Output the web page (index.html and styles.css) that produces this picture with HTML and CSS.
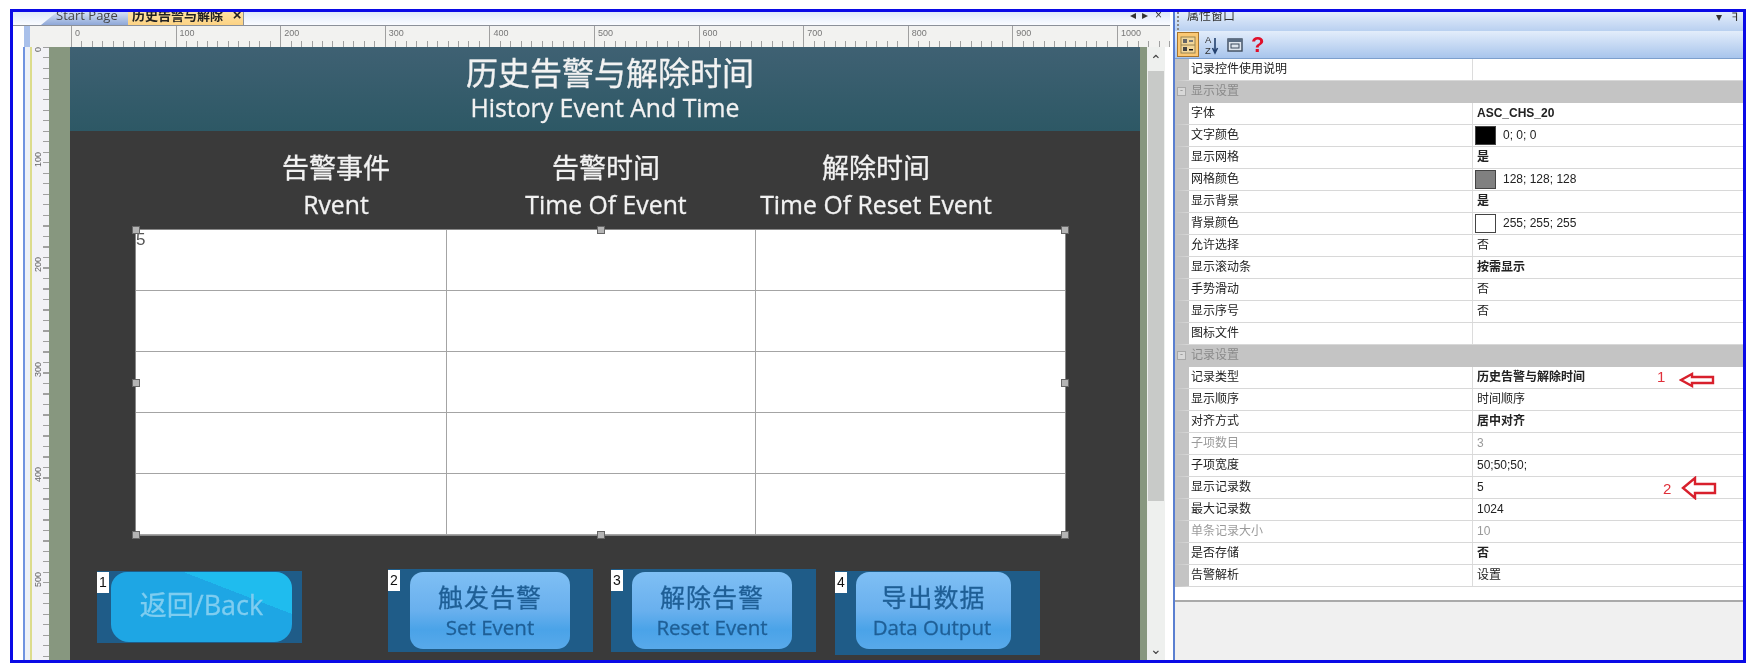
FILE: index.html
```html
<!DOCTYPE html>
<html>
<head>
  <meta charset="utf-8">
  <title>历史告警与解除时间</title>
  <link rel="stylesheet" href="styles.css">
</head>
<body>
  <div class="frame">

    <!-- designer pane -->
    <div class="designer">
      <div class="tabs">
        <div class="tab tab-start">Start Page</div>
        <div class="tab tab-active">历史告警与解除 <span class="tab-close">×</span></div>
        <div class="tab-tools">◂ &nbsp;▸ &nbsp;×</div>
      </div>

      <div class="ruler-row">
        <div class="ruler-corner"></div>
        <div class="ruler-h">
          <span>0</span><span>100</span><span>200</span><span>300</span><span>400</span><span>500</span><span>600</span><span>700</span><span>800</span><span>900</span><span>1000</span>
        </div>
      </div>

      <div class="workspace">
        <div class="gutter"></div>
        <div class="ruler-v">
          <span>0</span><span>100</span><span>200</span><span>300</span><span>400</span><span>500</span>
        </div>
        <div class="strip"></div>

        <div class="screen">
          <div class="screen-title">
            <div class="title-cn">历史告警与解除时间</div>
            <div class="title-en">History Event And Time</div>
          </div>

          <div class="col-heads">
            <div class="col-head"><div class="head-cn">告警事件</div><div class="head-en">Rvent</div></div>
            <div class="col-head"><div class="head-cn">告警时间</div><div class="head-en">Time Of Event</div></div>
            <div class="col-head"><div class="head-cn">解除时间</div><div class="head-en">Time Of Reset Event</div></div>
          </div>

          <div class="record-table">
            <div class="cell"></div><div class="cell"></div><div class="cell"></div>
            <div class="cell"></div><div class="cell"></div><div class="cell"></div>
            <div class="cell"></div><div class="cell"></div><div class="cell"></div>
            <div class="cell"></div><div class="cell"></div><div class="cell"></div>
            <div class="cell"></div><div class="cell"></div><div class="cell"></div>
            <span class="table-num">5</span>
            <i class="handle h-tl"></i><i class="handle h-tc"></i><i class="handle h-tr"></i>
            <i class="handle h-ml"></i><i class="handle h-mr"></i>
            <i class="handle h-bl"></i><i class="handle h-bc"></i><i class="handle h-br"></i>
          </div>

          <div class="buttons">
            <div class="btn-wrap btn-back">
              <span class="badge">1</span>
              <div class="btn btn-cyan"><div class="btn-single">返回/Back</div></div>
            </div>
            <div class="btn-wrap btn-set">
              <span class="badge">2</span>
              <div class="btn"><div class="btn-cn">触发告警</div><div class="btn-en">Set Event</div></div>
            </div>
            <div class="btn-wrap btn-reset">
              <span class="badge">3</span>
              <div class="btn"><div class="btn-cn">解除告警</div><div class="btn-en">Reset Event</div></div>
            </div>
            <div class="btn-wrap btn-output">
              <span class="badge">4</span>
              <div class="btn btn-narrow"><div class="btn-cn">导出数据</div><div class="btn-en">Data Output</div></div>
            </div>
          </div>
        </div>

        <div class="strip strip-right"></div>
        <div class="scrollbar">
          <span class="scroll-arrow">⌃</span>
          <div class="scroll-thumb"></div>
          <span class="scroll-arrow scroll-arrow-down">⌄</span>
        </div>
      </div>
    </div>

    <!-- property pane -->
    <div class="props">
      <div class="props-title">
        <span class="grip"></span>
        <span class="props-name">属性窗口</span>
        <span class="props-tools">▾ &nbsp;&nbsp;ꟻ</span>
      </div>

      <div class="toolbar">
        <span class="tool tool-active">
          <svg width="18" height="20" viewBox="0 0 18 20"><rect x="2" y="2" width="14" height="16" fill="#f3d79a" stroke="#9a8450"/><rect x="4" y="4" width="4" height="4" fill="#666"/><rect x="10" y="5" width="4" height="2" fill="#777"/><path d="M2 10h14" stroke="#9a8450"/><rect x="4" y="12" width="4" height="4" fill="#444"/><rect x="10" y="14" width="4" height="1.5" fill="#111"/></svg>
        </span>
        <span class="tool">
          <svg width="14" height="24" viewBox="0 0 14 24"><text x="0" y="10" class="az">A</text><text x="0" y="21" class="az">Z</text><path d="M10 5v14M7.5 15l2.5 5 2.500-5" fill="none" stroke="#24416e" stroke-width="1.6"/></svg>
        </span>
        <span class="tool tool-window">
          <svg width="16" height="14" viewBox="0 0 16 14"><rect x="1" y="1" width="14" height="12" fill="#dfe6ee" stroke="#3d4a5c" stroke-width="1.400"/><rect x="1" y="1" width="14" height="3" fill="#5a6c82"/><rect x="4" y="6" width="8" height="4" fill="none" stroke="#3d4a5c"/></svg>
        </span>
        <span class="tool tool-help">?</span>
      </div>

      <div class="grid">
        <div class="row"><div class="key">记录控件使用说明</div><div class="val"></div></div>
        <div class="row group"><span class="fold">-</span><div class="key">显示设置</div></div>
        <div class="row"><div class="key">字体</div><div class="val bold">ASC_CHS_20</div></div>
        <div class="row"><div class="key">文字颜色</div><div class="val"><i class="swatch swatch-black"></i>0; 0; 0</div></div>
        <div class="row"><div class="key">显示网格</div><div class="val bold">是</div></div>
        <div class="row"><div class="key">网格颜色</div><div class="val"><i class="swatch swatch-gray"></i>128; 128; 128</div></div>
        <div class="row"><div class="key">显示背景</div><div class="val bold">是</div></div>
        <div class="row"><div class="key">背景颜色</div><div class="val"><i class="swatch swatch-white"></i>255; 255; 255</div></div>
        <div class="row"><div class="key">允许选择</div><div class="val">否</div></div>
        <div class="row"><div class="key">显示滚动条</div><div class="val bold">按需显示</div></div>
        <div class="row"><div class="key">手势滑动</div><div class="val">否</div></div>
        <div class="row"><div class="key">显示序号</div><div class="val">否</div></div>
        <div class="row"><div class="key">图标文件</div><div class="val"></div></div>
        <div class="row group"><span class="fold">-</span><div class="key">记录设置</div></div>
        <div class="row">
          <div class="key">记录类型</div><div class="val bold">历史告警与解除时间</div>
          <span class="note note-1">1</span>
          <svg class="arrow arrow-1" width="36" height="16" viewBox="0 0 36 16"><path d="M2 8L13 2v3h21v6H13v3z" fill="none" stroke="#d8202c" stroke-width="2.400"/></svg>
        </div>
        <div class="row"><div class="key">显示顺序</div><div class="val">时间顺序</div></div>
        <div class="row"><div class="key">对齐方式</div><div class="val bold">居中对齐</div></div>
        <div class="row off"><div class="key">子项数目</div><div class="val">3</div></div>
        <div class="row"><div class="key">子项宽度</div><div class="val">50;50;50;</div></div>
        <div class="row">
          <div class="key">显示记录数</div><div class="val">5</div>
          <span class="note note-2">2</span>
          <svg class="arrow arrow-2" width="36" height="24" viewBox="0 0 36 24"><path d="M2 12L14 2v6h20v9H14v5z" fill="none" stroke="#d8202c" stroke-width="2.400"/></svg>
        </div>
        <div class="row"><div class="key">最大记录数</div><div class="val">1024</div></div>
        <div class="row off"><div class="key">单条记录大小</div><div class="val">10</div></div>
        <div class="row"><div class="key">是否存储</div><div class="val bold">否</div></div>
        <div class="row"><div class="key">告警解析</div><div class="val">设置</div></div>
      </div>
      <div class="grid-end"></div>
      <div class="description"></div>
    </div>

  </div>
</body>
</html>
```

FILE: styles.css
```css
body {
  margin: 0;
  background: #fff;
  font-family: "Liberation Sans", "Noto Sans CJK SC", sans-serif;
  font-size: 12px;
  color: #222;
}

.frame {
  margin: 9px 6px 0 10px;
  height: 648px;
  border: 3px solid #0a0ae6;
  display: flex;
  overflow: hidden;
  background: #fff;
  filter: blur(0.55px);
}

/* Designer pane */
.designer {
  width: 1157px;
  flex: none;
  display: flex;
  flex-direction: column;
}

.tabs {
  height: 13px;
  flex: none;
  display: flex;
  align-items: flex-end;
  background: linear-gradient(#dde8fa, #fafcff);
  border-bottom: 1px solid #8c9199;
  padding-left: 28px;
  overflow: hidden;
}

.tab {
  height: 13px;
  line-height: 6px;
  font-size: 12px;
  white-space: nowrap;
}

.tab-start {
  width: 87px;
  padding-left: 15px;
  box-sizing: border-box;
  color: #444;
  font-size: 13px;
  font-family: "Open Sans", sans-serif;
  background: linear-gradient(#d5e1f5, #8fa8d8);
  clip-path: polygon(16px 0, 100% 0, 100% 100%, 0 100%);
}

.tab-active {
  width: 116px;
  padding-left: 4px;
  box-sizing: border-box;
  background: linear-gradient(#fde2a4, #fdd384);
  font-size: 13px;
  font-weight: bold;
  border-right: 1px solid #8c9199;
}

.tab-close {
  margin-left: 6px;
  font-size: 15px;
}

.tab-tools {
  margin-left: auto;
  margin-right: 8px;
  line-height: 6px;
  height: 13px;
  color: #333;
}

.ruler-row {
  height: 21px;
  flex: none;
  display: flex;
  background: #f2f2f0;
}

.ruler-corner {
  width: 58px;
  flex: none;
  background: linear-gradient(90deg, #fff 0 11px, #a9c0ea 11px 17px, #f2f2f0 17px);
}

.ruler-h {
  flex: 1;
  display: flex;
  font-size: 9px;
  color: #777;
  background: repeating-linear-gradient(90deg, #a0a0a0 0, #a0a0a0 1px, transparent 1px, transparent 10.46px) 0 15px / 100% 6px no-repeat;
}

.ruler-h span {
  width: 104.6px;
  flex: none;
  box-sizing: border-box;
  padding-left: 3px;
  line-height: 14px;
  border-left: 1px solid #a0a0a0;
}

.workspace {
  flex: 1;
  min-height: 0;
  display: flex;
}

.gutter {
  width: 17px;
  flex: none;
  background: linear-gradient(90deg, #fff 0 10px, #6f93e0 10px 12px, #edf1f8 12px);
}

.ruler-v {
  width: 19px;
  flex: none;
  display: flex;
  flex-direction: column;
  font-size: 9px;
  color: #666;
  background: repeating-linear-gradient(180deg, #a0a0a0 0, #a0a0a0 1px, transparent 1px, transparent 10.5px) 11px 0 / 8px 100% no-repeat #f2f2f6;
  border-left: 2px solid #dcdc8c;
  box-sizing: border-box;
}

.ruler-v span {
  height: 105px;
  flex: none;
  writing-mode: vertical-rl;
  transform: rotate(180deg);
  text-align: right;
  line-height: 12px;
}

.strip {
  width: 21px;
  flex: none;
  background: #87977f;
}

.strip-right {
  width: 7px;
}

/* Panel being edited */
.screen {
  width: 1070px;
  flex: none;
  background: #3a3a3a;
  color: #f2f2f2;
  font-family: "Open Sans", "Noto Sans CJK SC", sans-serif;
  -webkit-text-stroke: 0.3px currentColor;
}

.screen-title {
  height: 84px;
  background: linear-gradient(#3f6173, #2d5865);
  text-align: center;
  box-sizing: border-box;
  padding-top: 8px;
}

.title-cn {
  font-size: 32px;
  line-height: 36px;
  padding-left: 10px;
}

.title-en {
  font-size: 24.800px;
  line-height: 33px;
}

.col-heads {
  display: grid;
  grid-template-columns: repeat(3, 270px);
  padding: 23px 0 12px 131px;
  text-align: center;
}

.head-cn {
  font-size: 27px;
  line-height: 28px;
}

.head-en {
  font-size: 24.800px;
  line-height: 28px;
  margin-top: 8px;
}

.record-table {
  position: relative;
  margin-left: 66px;
  width: 929px;
  height: 305px;
  box-sizing: border-box;
  background: #fff;
  display: grid;
  grid-template-columns: 310px 309px 310px;
  grid-template-rows: repeat(5, 61px);
  box-shadow: 0 0 0 1px #888;
}

.cell {
  border-left: 1px solid #a4a4a4;
  border-bottom: 1px solid #a4a4a4;
}

.cell:nth-child(3n+1) {
  border-left: 0;
}

.table-num {
  position: absolute;
  left: 0;
  top: 1px;
  font-size: 17px;
  line-height: 18px;
  color: #555;
  font-family: "Liberation Sans", sans-serif;
  -webkit-text-stroke: 0;
}

.handle {
  position: absolute;
  width: 8px;
  height: 8px;
  background: #b4b4b4;
  border: 1px solid #666;
  box-sizing: border-box;
}

.h-tl { left: -4px; top: -4px; }
.h-tc { left: 461px; top: -4px; }
.h-tr { right: -4px; top: -4px; }
.h-ml { left: -4px; top: 149px; }
.h-mr { right: -4px; top: 149px; }
.h-bl { left: -4px; bottom: -4px; }
.h-bc { left: 461px; bottom: -4px; }
.h-br { right: -4px; bottom: -4px; }

.buttons {
  display: flex;
  align-items: flex-start;
  margin-top: 34px;
  padding-left: 27px;
}

.btn-wrap {
  position: relative;
  width: 205px;
  height: 83px;
  flex: none;
  box-sizing: border-box;
  background: #1f5c88;
  padding: 3px 0 0 22px;
}

.btn-back {
  height: 72px;
  margin-top: 2px;
  padding: 1px 0 0 14px;
}

.btn-set {
  margin-left: 86px;
}

.btn-reset {
  margin-left: 18px;
  padding-left: 21px;
}

.btn-output {
  margin-left: 19px;
  height: 84px;
  margin-top: 2px;
  padding: 1px 0 0 21px;
}

.badge {
  position: absolute;
  left: 0;
  top: 1px;
  width: 12px;
  height: 21px;
  background: #fff;
  color: #111;
  font-size: 14px;
  line-height: 20px;
  text-align: center;
  font-family: "Liberation Sans", sans-serif;
  -webkit-text-stroke: 0;
}

.btn {
  width: 160px;
  height: 77px;
  border-radius: 13px;
  background: linear-gradient(#7fbff4 0%, #69b0ee 50%, #4aa3e8 75%, #58a9ea 100%);
  color: #1f5f96;
  text-align: center;
  box-sizing: border-box;
  padding-top: 9px;
}

.btn-narrow {
  width: 155px;
}

.btn-cyan {
  width: 181px;
  height: 70px;
  background: linear-gradient(to top right, #1ea6e4 0 70%, #1fbcee 70%);
  border-radius: 16px 16px 18px 18px;
  padding-top: 15px;
  color: #7fcdf0;
}

.btn-single {
  font-size: 27px;
  line-height: 36px;
}

.btn-cn {
  font-size: 25px;
  line-height: 33px;
  letter-spacing: 1px;
}

.btn-en {
  font-size: 20.500px;
  line-height: 26px;
}

.btn-narrow .btn-en {
  margin: 0 -3px 0 -6px;
  white-space: nowrap;
}

.scrollbar {
  width: 18px;
  flex: none;
  position: relative;
  background: #eef0ee;
  display: flex;
  flex-direction: column;
  align-items: stretch;
  text-align: center;
}

.scroll-arrow {
  height: 24px;
  line-height: 26px;
  font-size: 14px;
  color: #444;
  flex: none;
}

.scroll-arrow-down {
  margin-top: auto;
  height: 14px;
  line-height: 6px;
}

.scroll-thumb {
  height: 430px;
  background: #c8cac8;
  margin: 0 1px;
}

/* Property pane */
.props {
  flex: 1;
  min-width: 0;
  margin-left: 3px;
  border-left: 2px solid #5a7fd0;
  display: flex;
  flex-direction: column;
  background: #f0f0f0;
}

.props-title {
  height: 19px;
  flex: none;
  display: flex;
  align-items: flex-start;
  background: linear-gradient(#e4eefb, #b9d0f0);
  overflow: hidden;
  color: #333;
}

.grip {
  width: 2px;
  height: 19px;
  margin-left: 2px;
  background: repeating-linear-gradient(#888 0, #888 2px, transparent 2px, transparent 4px);
}

.props-name {
  margin-left: 8px;
  line-height: 8px;
}

.props-tools {
  margin-left: auto;
  margin-right: 5px;
  line-height: 11px;
}

.toolbar {
  height: 28px;
  flex: none;
  box-sizing: border-box;
  display: flex;
  align-items: center;
  gap: 6px;
  padding-left: 2px;
  background: linear-gradient(#e3edfb, #a8c5ec);
  border-bottom: 1px solid #7d9fcc;
}

.tool {
  display: flex;
  align-items: center;
  justify-content: center;
}

.tool-active {
  width: 22px;
  height: 25px;
  background: #fbc873;
  border: 1px solid #a8742c;
  box-sizing: border-box;
}

.tool-window {
  margin-left: 2px;
}

.az {
  font-size: 9.500px;
  fill: #333;
}

.tool-help {
  font-size: 22px;
  font-weight: bold;
  color: #e0102a;
  line-height: 24px;
  margin-left: 2px;
}

.grid {
  flex: none;
  background: #fff;
}

.row {
  position: relative;
  height: 22px;
  box-sizing: border-box;
  display: flex;
  line-height: 21px;
  border-bottom: 1px solid #d8d8d8;
  border-left: 14px solid #c4c4c4;
}

.key {
  width: 284px;
  flex: none;
  box-sizing: border-box;
  padding-left: 2px;
  border-right: 1px solid #dcdcdc;
  height: 21px;
}

.val {
  flex: 1;
  padding-left: 4px;
  display: flex;
  align-items: center;
}

.bold {
  font-weight: bold;
}

.group {
  background: #c4c4c4;
  color: #8a8a8a;
  border-bottom: 0;
}

.group .key {
  border-right: 0;
}

.fold {
  position: absolute;
  left: -12px;
  top: 6px;
  width: 9px;
  height: 9px;
  box-sizing: border-box;
  border: 1px solid #a8a8a8;
  background: #d8d8d8;
  line-height: 5px;
  font-size: 9px;
  text-align: center;
}

.off {
  color: #9a9a9a;
}

.swatch {
  width: 21px;
  height: 19px;
  flex: none;
  box-sizing: border-box;
  border: 1px solid #444;
  margin: 0 7px 0 -2px;
}

.swatch-black { background: #000; }
.swatch-gray { background: #808080; }
.swatch-white { background: #fff; }

.note {
  position: absolute;
  color: #e0303a;
  font-size: 15px;
  line-height: 18px;
  top: 1px;
}

.note-1 { left: 468px; }
.note-2 { left: 474px; top: 3px; }

.arrow {
  position: absolute;
}

.arrow-1 { left: 490px; top: 5px; }
.arrow-2 { left: 492px; top: -1px; }

.grid-end {
  height: 13px;
  flex: none;
  background: #fff;
  border-bottom: 2px solid #aaa;
}

.description {
  flex: 1;
  background: #f0f0f0;
}
```
